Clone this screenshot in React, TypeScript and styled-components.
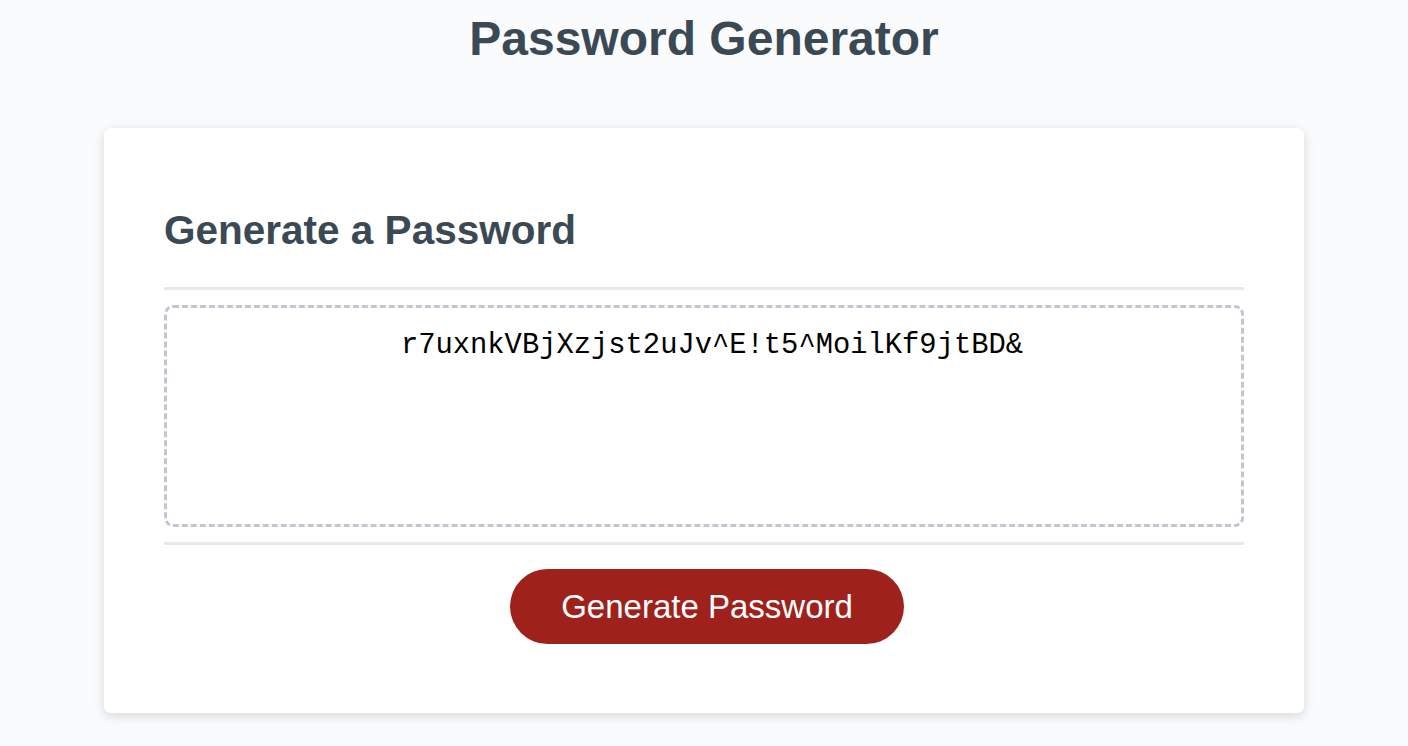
import styled, { createGlobalStyle } from "styled-components"

const password = "r7uxnkVBjXzjst2uJv^E!t5^MoilKf9jtBD&"

const GlobalStyle = createGlobalStyle`
  html, body {
    margin: 0;
    padding: 0;
  }
  body {
    background-color: #f9fbfd;
    font-family: "Liberation Sans", Arial, Helvetica, sans-serif;
  }
  * {
    box-sizing: border-box;
  }
`

const App = () => {
  return (
    <>
      <GlobalStyle />
      <Wrapper>
        <Header>
          <Title>Password Generator</Title>
        </Header>
        <Card>
          <CardHeader>
            <CardTitle>Generate a Password</CardTitle>
          </CardHeader>
          <CardBody>
            <PasswordBox
              readOnly
              id="password"
              aria-label="Generated Password"
              defaultValue={password}
            />
          </CardBody>
          <CardFooter>
            <GenerateButton id="generate">Generate Password</GenerateButton>
          </CardFooter>
        </Card>
      </Wrapper>
    </>
  )
}

const Wrapper = styled.div`
  padding: 11px 30px 33px;
`

const Header = styled.header`
  text-align: center;
  color: #3b4954;
  margin-bottom: 62px;
`

const Title = styled.h1`
  margin: 0;
  font-size: 48px;
  font-weight: 700;
  line-height: 55px;
`

const Card = styled.section`
  background-color: #fff;
  border-radius: 7px;
  box-shadow: rgba(0, 0, 0, 0.15) 0 3px 12px 0;
  color: #3b4954;
  font-size: 27px;
  margin: 0 auto;
  max-width: 1200px;
  padding: 45px 60px;
`

const CardHeader = styled.div`
  border-bottom: 3px solid #e7e9eb;
`

const CardTitle = styled.h2`
  margin: 34px 0;
  font-size: 40.5px;
  font-weight: 700;
  line-height: 46px;
`

const CardBody = styled.div`
  padding: 15px 0;
`

const PasswordBox = styled.textarea`
  display: block;
  width: 100%;
  height: 222px;
  margin: 0;
  padding: 22px 22px 30px 38px;
  border: 3px dashed #c0c7cf;
  border-radius: 9px;
  resize: none;
  overflow: hidden;
  outline: none;
  font-family: "Liberation Mono", "Courier New", monospace;
  font-size: 28.8px;
  line-height: 32px;
  text-align: center;
  color: #000;
  background: #fff;
`

const CardFooter = styled.div`
  border-top: 3px solid #e7e9eb;
  text-align: center;
  padding: 24px 0;
`

const GenerateButton = styled.button`
  border: none;
  background-color: #9e221b;
  border-radius: 38px;
  color: #fff;
  display: inline-block;
  margin-left: 6px;
  font-family: "Liberation Sans", Arial, Helvetica, sans-serif;
  font-size: 33px;
  line-height: 33px;
  padding: 21px 51px;
  cursor: pointer;
`

export default App
